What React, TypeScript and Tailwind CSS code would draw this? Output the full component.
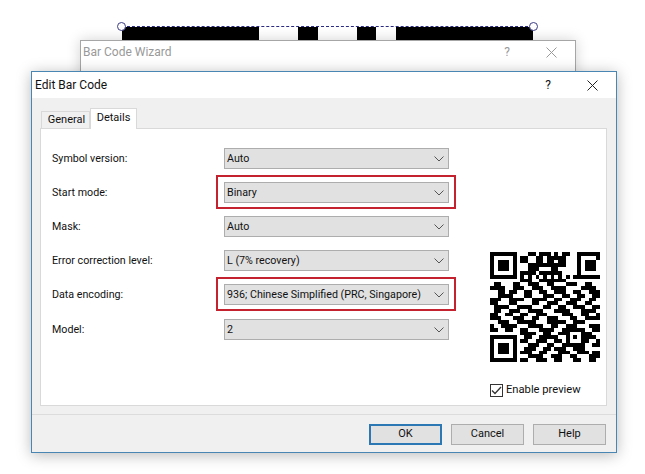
const font = { fontFamily: 'Roboto, "Liberation Sans", Arial, sans-serif' };

const rows = [
  { label: 'Symbol version:', value: 'Auto', mt: 'mt-0' },
  { label: 'Start mode:', value: 'Binary', mt: 'mt-[13px]', red: true },
  { label: 'Mask:', value: 'Auto', mt: 'mt-[13px]' },
  { label: 'Error correction level:', value: 'L (7% recovery)', mt: 'mt-[13px]' },
  { label: 'Data encoding:', value: '936; Chinese Simplified (PRC, Singapore)', mt: 'mt-[13px]', red: true },
  { label: 'Model:', value: '2', mt: 'mt-[14px]' },
];

const qr = [
  '11111110001101110101100111111',
  '10000010110011011111000100001',
  '10111010110011011011000101110'.padEnd(29, '1'),
  '10111010001111111111000101110'.padEnd(29, '1'),
  '10111010001110001100000101110'.padEnd(29, '1'),
  '10000010111101111110000100000'.padEnd(29, '1'),
  '11111110101010101010101111111',
  '00000000111001111111000000000',
  '01100011001110011000111001100',
  '11110011100111001111000011110',
  '00110110011001100111001100111',
  '00111100011000111001100110011',
  '11100111100111100110011100110',
  '11000110000110011100111001100',
  '01111001111000110011001110011',
  '01100111001111000111100011110',
  '11001100110011100001110011001',
  '11100011100110011100011001111',
  '00111001111100011111001110000',
  '10011110001111001100111000111',
  '11001100110001111001111110011',
  '00000000111100110011100011100',
  '11111110011001111100101011110',
  '10000010110011100110100011001',
  '10111010001110011001111110011',
  '10111010011100110111001110000',
  '10111010111001100011100111011',
  '10000010001111001110011000111',
  '11111110110011100110001100110',
];

function Chevron() {
  return (
    <svg width="10" height="6" viewBox="0 0 10 6" className="flex-shrink-0">
      <polyline points="0.5,0.5 5,5 9.5,0.5" fill="none" stroke="#555" strokeWidth="1" />
    </svg>
  );
}

function Close({ color }: { color: string }) {
  return (
    <svg width="11" height="11" viewBox="0 0 11 11">
      <path d="M0.5 0.5 L10.5 10.5 M10.5 0.5 L0.5 10.5" fill="none" stroke={color} strokeWidth="1" />
    </svg>
  );
}

function Select({ value, red }: { value: string; red?: boolean }) {
  return (
    <div className="relative w-[225px] h-[21px] bg-[#e1e1e1] border border-[#adadad] flex items-center justify-between pl-[2px] pr-[4px] text-[10.7px] text-[#111]">
      <span className="pt-[2px]">{value}</span>
      <Chevron />
      {red && <div className="absolute left-[-9px] right-[-8px] top-[-8px] bottom-[-7px] border-2 border-[#c5222f]" />}
    </div>
  );
}

function Btn({ label, primary }: { label: string; primary?: boolean }) {
  return (
    <div
      className={`w-[73px] h-[21px] bg-[#e1e1e1] flex items-center justify-center text-[11px] text-[#111] ${
        primary ? 'border-2 border-[#2b78b4]' : 'border border-[#adadad]'
      }`}
    >
      {label}
    </div>
  );
}

export default function App() {
  return (
    <div style={font} className="relative w-[645px] h-[474px] bg-white overflow-hidden">
      {/* bar code on the canvas behind the windows */}
      <div className="absolute left-[122px] top-[27px] w-[411px] h-[13px] flex justify-between">
        <div className="w-[137px] bg-black" />
        <div className="w-[20px] bg-black ml-[39px]" />
        <div className="w-[19px] bg-black ml-[39px]" />
        <div className="w-[137px] bg-black ml-[20px]" />
      </div>
      <div className="absolute left-[122px] top-[26px] w-[411px] border-t border-dashed border-[#2a2a80]" />
      <div className="absolute left-[117px] top-[22px] w-[9px] h-[9px] rounded-full bg-white border border-[#3b3b86]" />
      <div className="absolute left-[529px] top-[22px] w-[9px] h-[9px] rounded-full bg-white border border-[#3b3b86]" />

      {/* wizard window behind */}
      <div className="absolute left-[80px] top-[40px] w-[496px] h-[40px] bg-white border border-[#a6a6a6] shadow-[0_0_14px_rgba(0,0,0,0.18)]">
        <div className="h-[22px] flex items-center pl-[2px] pr-[18px] text-[12px] text-[#999]">
          <span className="flex-1">Bar Code Wizard</span>
          <span className="mr-[36px]">?</span>
          <Close color="#999" />
        </div>
      </div>

      {/* edit dialog */}
      <div className="absolute left-[31px] top-[71px] w-[586px] h-[382px] bg-[#f0f0f0] border border-[#4a86b4] shadow-[0_2px_14px_rgba(0,0,0,0.28)] flex flex-col">
        <div className="h-[26px] bg-white flex items-center pl-[3px] pr-[18px] text-[12px] text-[#111] flex-shrink-0">
          <span className="flex-1">Edit Bar Code</span>
          <span className="mr-[36px]">?</span>
          <Close color="#222" />
        </div>

        <div className="pl-[8px] pr-[9px] flex-shrink-0">
          <div className="h-[30px] flex items-end pl-[1px] text-[11px] text-[#111]">
            <div className="w-[49px] h-[17px] bg-[#f0f0f0] border border-b-0 border-[#d9d9d9] flex items-center justify-center pl-[2px] pt-[1px]">General</div>
            <div className="w-[47px] h-[21px] bg-white border border-b-0 border-[#d9d9d9] flex items-center justify-center relative z-10 mb-[-1px] pb-[2px]">Details</div>
          </div>
          <div className="h-[278px] bg-white border border-[#d9d9d9] flex pl-[11px] pt-[19px]">
            <div className="w-[397px] flex-shrink-0">
              {rows.map((r) => (
                <div key={r.label} className={`flex items-center ${r.mt}`}>
                  <span className="w-[172px] text-[10.7px] text-[#111] pt-[2px]">{r.label}</span>
                  <Select value={r.value} red={r.red} />
                </div>
              ))}
            </div>
            <div className="ml-[41px] pt-[104px]">
              <svg width="110" height="110" viewBox="0 0 29 29" shapeRendering="crispEdges">
                {qr.map((row, y) =>
                  row.split('').map((c, x) => (c === '1' ? <rect key={`${x}-${y}`} x={x} y={y} width="1" height="1" fill="#000" /> : null)),
                )}
              </svg>
              <div className="mt-[20px] flex items-center gap-[3px] text-[11.2px] text-[#111] whitespace-nowrap">
                <span className="w-[13px] h-[13px] border border-[#333] bg-white flex items-center justify-center">
                  <svg width="11" height="9" viewBox="0 0 11 9">
                    <path d="M1 4.5 L4 7.5 L10 1" fill="none" stroke="#333" strokeWidth="1.3" />
                  </svg>
                </span>
                Enable preview
              </div>
            </div>
          </div>
        </div>

        <div className="mt-[8px] flex-1 border-t border-[#dcdcdc] flex justify-end items-start gap-[9px] pt-[9px] pr-[10px]">
          <Btn label="OK" primary />
          <Btn label="Cancel" />
          <Btn label="Help" />
        </div>
      </div>
    </div>
  );
}
